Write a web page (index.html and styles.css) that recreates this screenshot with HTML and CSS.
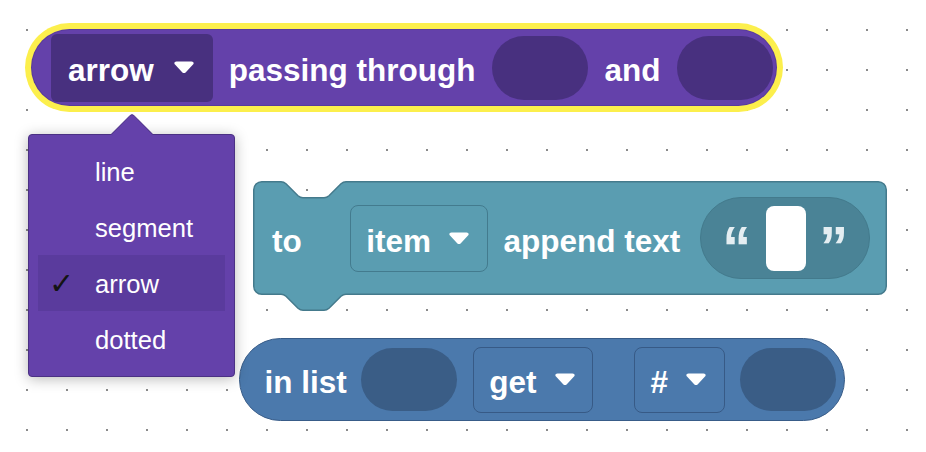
FILE: index.html
```html
<!DOCTYPE html>
<html>
<head>
<meta charset="utf-8">
<link rel="stylesheet" href="styles.css">
</head>
<body>
<div class="workspace">

  <div class="block block-purple">
    <div class="field field-purple">
      <span class="label">arrow</span>
      <svg class="dd-arrow" viewBox="0 0 20 13" width="20" height="13"><path d="M2.5 0.5 H17.5 C19.5 0.5 20.3 2.3 19 3.6 L11.6 11.4 C10.7 12.3 9.3 12.3 8.4 11.4 L1 3.6 C-0.3 2.3 0.5 0.5 2.5 0.5 Z" fill="#fff"/></svg>
    </div>
    <span class="label m-passing">passing through</span>
    <div class="slot slot-purple m-slot1"></div>
    <span class="label m-and">and</span>
    <div class="slot slot-purple m-slot2"></div>
  </div>

  <div class="block-teal">
    <svg class="teal-shape" width="634" height="132" viewBox="0 0 634 132"><path d="M0.75 8.75 A8 8 0 0 1 8.75 0.75 H28 c2 0 3.5 0.7 5 2 l12 12 c1.5 1.3 3 2 5 2 h21 c2 0 3.5 -0.7 5 -2 l12 -12 c1.5 -1.3 3 -2 5 -2 H625.25 A8 8 0 0 1 633.25 8.75 V105.25 A8 8 0 0 1 625.25 113.25 H93 c-2 0 -3.5 0.7 -5 2 l-12 12 c-1.5 1.3 -3 2 -5 2 h-21 c-2 0 -3.5 -0.7 -5 -2 l-12 -12 c-1.5 -1.3 -3 -2 -5 -2 H8.75 A8 8 0 0 1 0.75 105.25 Z" fill="#5a9db1" stroke="#447a8c" stroke-width="1.5"/></svg>
    <div class="teal-row">
      <span class="label">to</span>
      <div class="field field-teal m-item">
        <span class="label">item</span>
        <svg class="dd-arrow dd-arrow-b" viewBox="0 0 20 13" width="20" height="13"><path d="M2.5 0.5 H17.5 C19.5 0.5 20.3 2.3 19 3.6 L11.6 11.4 C10.7 12.3 9.3 12.3 8.4 11.4 L1 3.6 C-0.3 2.3 0.5 0.5 2.5 0.5 Z" fill="#fff"/></svg>
      </div>
      <span class="label m-append">append text</span>
      <div class="text-pill">
        <span class="quote">“</span>
        <span class="text-box"></span>
        <span class="quote quote-r">”</span>
      </div>
    </div>
  </div>

  <div class="block block-blue">
    <span class="label">in list</span>
    <div class="slot slot-blue m-blue1"></div>
    <div class="field field-blue m-get">
      <span class="label">get</span>
      <svg class="dd-arrow dd-arrow-b" viewBox="0 0 20 13" width="20" height="13"><path d="M2.5 0.5 H17.5 C19.5 0.5 20.3 2.3 19 3.6 L11.6 11.4 C10.7 12.3 9.3 12.3 8.4 11.4 L1 3.6 C-0.3 2.3 0.5 0.5 2.5 0.5 Z" fill="#fff"/></svg>
    </div>
    <div class="field field-blue m-hash">
      <span class="label">#</span>
      <svg class="dd-arrow dd-arrow-b" viewBox="0 0 20 13" width="20" height="13"><path d="M2.5 0.5 H17.5 C19.5 0.5 20.3 2.3 19 3.6 L11.6 11.4 C10.7 12.3 9.3 12.3 8.4 11.4 L1 3.6 C-0.3 2.3 0.5 0.5 2.5 0.5 Z" fill="#fff"/></svg>
    </div>
    <div class="slot slot-blue m-blue2"></div>
  </div>

  <div class="menu">
    <div class="menu-caret"></div>
    <div class="item"><span class="check"></span><span class="item-text">line</span></div>
    <div class="item"><span class="check"></span><span class="item-text">segment</span></div>
    <div class="item active"><span class="check">✓</span><span class="item-text">arrow</span></div>
    <div class="item"><span class="check"></span><span class="item-text">dotted</span></div>
  </div>

</div>
</body>
</html>
```

FILE: styles.css
```css
html, body {
  margin: 0;
  padding: 0;
  background: #ffffff;
}

body {
  font-family: "Liberation Sans", Arial, sans-serif;
  overflow: hidden;
}

.workspace {
  position: relative;
  width: 926px;
  height: 452px;
  background-color: #ffffff;
  background-image: radial-gradient(circle at center, #8a8a8a 0, #8a8a8a 1px, rgba(138,138,138,0) 1.3px);
  background-size: 40px 40px;
  background-position: 7px 10px;
}

.label {
  color: #ffffff;
  font-weight: 700;
  font-size: 31.5px;
  line-height: 1;
  white-space: nowrap;
  padding-top: 7px;
}

/* generic block */
.block {
  position: absolute;
  display: flex;
  align-items: center;
  box-sizing: border-box;
}

/* purple selected block */
.block-purple {
  left: 32px;
  top: 30px;
  width: 744px;
  height: 75px;
  border-radius: 38px;
  background: #6441aa;
  box-shadow: 0 0 0 1px #583a9c, 0 0 0 7px #fcef4c;
  padding-left: 19px;
}

.field {
  display: flex;
  align-items: center;
  box-sizing: border-box;
  flex: none;
}

.field-purple {
  height: 68px;
  border-radius: 6px;
  background: #48307f;
  padding: 0 19px 0 17px;
}

.dd-arrow {
  display: block;
  flex: none;
  margin-left: 20px;
}

.dd-arrow-b {
  margin-left: 18px;
}

.slot {
  flex: none;
}

.slot-purple {
  width: 96px;
  height: 64px;
  border-radius: 32px;
  background: #48307f;
}

.m-passing { margin-left: 16px; }
.m-slot1 { margin-left: 16px; }
.m-and { margin-left: 17px; }
.m-slot2 { margin-left: 16px; }

/* teal statement block */
.block-teal {
  position: absolute;
  left: 253px;
  top: 181px;
  width: 634px;
  height: 114px;
}

.teal-shape {
  position: absolute;
  left: 0;
  top: 0;
  overflow: visible;
}

.teal-row {
  position: relative;
  display: flex;
  align-items: center;
  height: 100%;
  padding-left: 19px;
}

.field-teal {
  height: 67px;
  border: 1.5px solid #437b8e;
  border-radius: 8px;
  padding: 0 17.5px 0 15.5px;
}

.m-item { margin-left: 48px; }
.m-append { margin-left: 16px; }

.text-pill {
  flex: none;
  display: flex;
  align-items: center;
  justify-content: center;
  box-sizing: border-box;
  width: 170px;
  height: 82px;
  margin-left: 20px;
  border-radius: 41px;
  background: #4a8396;
  border: 1.5px solid #437a8c;
}

.quote {
  display: block;
  height: 18px;
  color: #e4eef2;
  font-weight: 700;
  font-size: 58px;
  line-height: 36px;
}

.text-box {
  display: block;
  width: 40px;
  height: 65px;
  margin: 0 13px 0 15px;
  border-radius: 8px;
  background: #ffffff;
}

/* blue block */
.block-blue {
  left: 239px;
  top: 338px;
  width: 606px;
  height: 83px;
  border-radius: 42px;
  background: #4b79ac;
  border: 1.5px solid #385c88;
  padding-left: 24.5px;
}

.slot-blue {
  width: 96px;
  height: 63px;
  border-radius: 32px;
  background: #3a5d86;
}

.field-blue {
  height: 66px;
  border: 1.5px solid #375a86;
  border-radius: 8px;
  padding: 0 17.5px 0 15.5px;
}

.m-blue1 { margin-left: 14px; }
.m-get { margin-left: 16px; }
.m-hash { margin-left: 41px; }
.m-blue2 { margin-left: 15px; }

/* dropdown menu */
.menu {
  position: absolute;
  left: 28px;
  top: 134px;
  width: 207px;
  height: 243px;
  box-sizing: border-box;
  background: #6441aa;
  border: 1px solid #4b3184;
  border-radius: 4px;
  padding: 8px 9px;
  box-shadow: 0 2px 14px rgba(0, 0, 0, 0.28);
}

.menu-caret {
  position: absolute;
  left: 88px;
  top: -16px;
  width: 30px;
  height: 30px;
  box-sizing: border-box;
  background: #6441aa;
  border-top: 1px solid #4b3184;
  border-left: 1px solid #4b3184;
  border-top-left-radius: 4px;
  transform: rotate(45deg);
}

.item {
  position: relative;
  display: flex;
  align-items: center;
  height: 56px;
  color: #ffffff;
  font-size: 25.6px;
  line-height: 1;
}

.item-text {
  display: block;
  padding-top: 4px;
}

.item.active {
  background: #5a3b9d;
}

.check {
  display: block;
  flex: none;
  box-sizing: border-box;
  width: 57px;
  padding-left: 11px;
  padding-top: 2px;
  color: #141414;
  font-family: "DejaVu Sans", sans-serif;
  font-weight: 700;
  font-size: 30px;
}
```
